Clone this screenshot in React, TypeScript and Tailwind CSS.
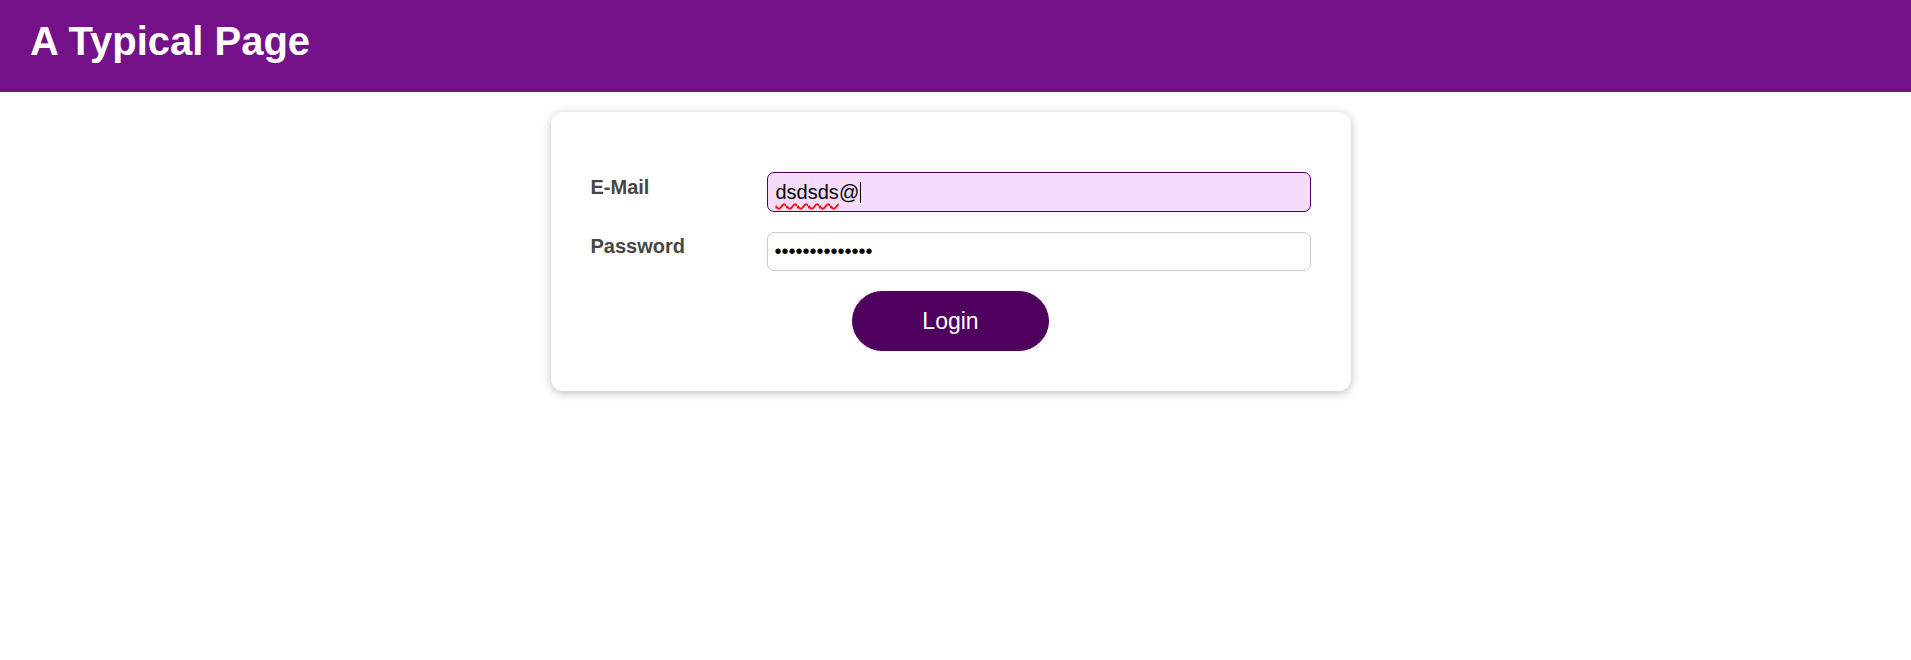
import React from "react";

/* ------------------------------------------------------------------ */
/*  Header                                                             */
/* ------------------------------------------------------------------ */

function MainHeader() {
  return (
    <header className="flex h-[92px] w-full items-start bg-[#741188] pl-[30px] pt-[21px]">
      <h1 className="text-[40px] font-bold leading-[40px] text-white">
        A Typical Page
      </h1>
    </header>
  );
}

/* ------------------------------------------------------------------ */
/*  Login card                                                         */
/* ------------------------------------------------------------------ */

function Login() {
  return (
    <div className="mx-auto mt-[20px] w-[800px] rounded-[12px] bg-white p-[40px] shadow-[0_2px_10px_rgba(0,0,0,0.26)]">
      <form onSubmit={(e) => e.preventDefault()}>
        <div className="my-[20px] flex flex-row items-center">
          <label
            htmlFor="email"
            className="mb-[10px] w-[176px] shrink-0 text-[20px] font-bold leading-[23px] text-[#464646]"
          >
            E-Mail
          </label>
          {/* focused email field, drawn as it looks mid-typing */}
          <div
            id="email"
            className="flex h-[40px] flex-1 items-center rounded-[7px] border border-[#4f005f] bg-[#f6dbfc] px-[8px] text-[20px] leading-[24px] text-black"
          >
            <span className="underline decoration-[#f01010] decoration-wavy decoration-[1.5px] underline-offset-[4px]">
              dsdsds
            </span>
            <span>@</span>
            <span className="ml-px inline-block h-[21px] w-px bg-black" />
          </div>
        </div>
        <div className="my-[20px] flex flex-row items-center">
          <label
            htmlFor="password"
            className="mb-[10px] w-[176px] shrink-0 text-[20px] font-bold leading-[23px] text-[#464646]"
          >
            Password
          </label>
          <input
            id="password"
            type="password"
            readOnly
            value="dsdsdsdsdsdsds"
            className="h-[39px] flex-1 rounded-[7px] border border-[#ccc] bg-white px-[7px] text-[20px] leading-[24px] text-black outline-none"
            style={{ fontFamily: '"Liberation Sans", Arial, sans-serif' }}
          />
        </div>
        <div className="text-center">
          <button
            type="submit"
            className="rounded-full border border-[#4f005f] bg-[#4f005f] px-[69px] py-[15px] text-[23px] leading-[28px] text-white"
          >
            Login
          </button>
        </div>
      </form>
    </div>
  );
}

export default function App() {
  return (
    <div className="min-h-[660px] bg-white font-['Liberation_Sans',Arial,sans-serif]">
      <MainHeader />
      <main className="pr-[10px]">
        <Login />
      </main>
    </div>
  );
}
